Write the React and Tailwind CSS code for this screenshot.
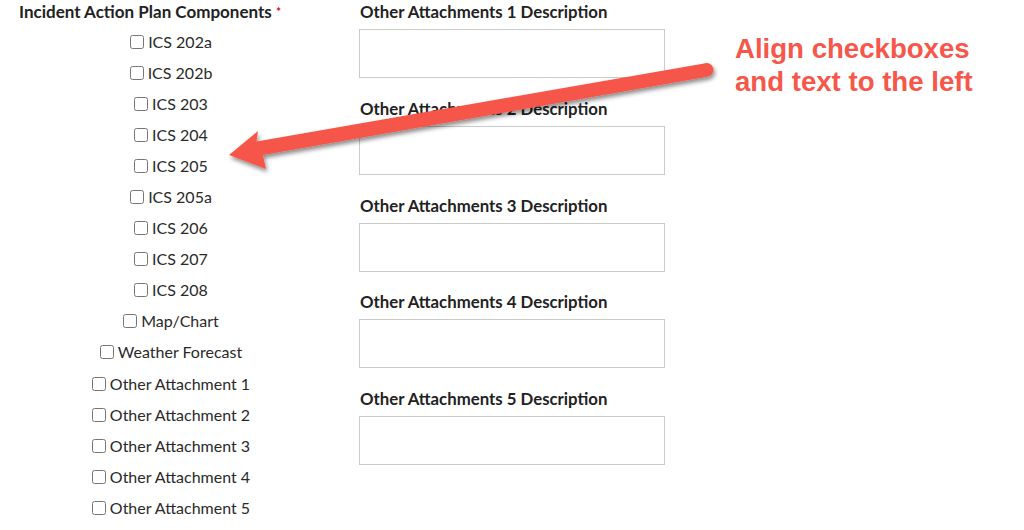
import React from "react";

const components = [
  "ICS 202a",
  "ICS 202b",
  "ICS 203",
  "ICS 204",
  "ICS 205",
  "ICS 205a",
  "ICS 206",
  "ICS 207",
  "ICS 208",
  "Map/Chart",
  "Weather Forecast",
  "Other Attachment 1",
  "Other Attachment 2",
  "Other Attachment 3",
  "Other Attachment 4",
  "Other Attachment 5",
];

const descriptions = [1, 2, 3, 4, 5];

// Red callout arrow pointing back at the checkbox list
const CalloutArrow = () => (
  <svg
    className="absolute inset-0 pointer-events-none"
    width="1024"
    height="530"
    viewBox="0 0 1024 530"
  >
    <defs>
      <filter id="arrowShadow" x="-10%" y="-50%" width="120%" height="200%">
        <feDropShadow dx="1.5" dy="3" stdDeviation="2" floodColor="#000" floodOpacity="0.45" />
      </filter>
    </defs>
    <g filter="url(#arrowShadow)" fill="#f6574a">
      <path d="M707 63 Q713 64 713 70 Q712 75 706 77 L252 157 L248 143 Z" />
      <circle cx="707" cy="70" r="6.5" />
      <path d="M229 155 L258 131 L256 145 L262 151 L266 169 Z" />
    </g>
  </svg>
);

const App = () => {
  return (
    <div className="relative w-[1024px] h-[530px] overflow-hidden bg-white text-[#222] font-['Lato',sans-serif]">
      <div className="flex gap-[17px]">
        {/* Checkbox column */}
        <div className="w-[342px]">
          <div className="pl-[19px] mt-[1px] h-[21px] leading-[21px] text-[17px] font-bold">
            Incident Action Plan Components{" "}
            <span className="text-[#d0021b] text-[12px] align-top">*</span>
          </div>
          <div className="mt-[4px] flex flex-col text-[#2a2a2a]">
            {components.map((name) => (
              <label
                key={name}
                className="h-[31.1px] flex items-center justify-center text-[16px]"
              >
                <input type="checkbox" className="w-[14px] h-[14px] m-0 mr-[4px]" />
                {name}
              </label>
            ))}
          </div>
        </div>

        {/* Description inputs */}
        <div className="w-[306px]">
          {descriptions.map((n) => (
            <div key={n} className="mb-[19.75px] first:mt-[1px]">
              <div className="h-[21px] leading-[21px] text-[16.8px] font-bold pl-[1px]">
                Other Attachments {n} Description
              </div>
              <input
                type="text"
                className="mt-[7px] block w-[306px] h-[49px] border border-[#cacaca] bg-white"
              />
            </div>
          ))}
        </div>
      </div>

      <CalloutArrow />

      <div className="absolute left-[735px] top-[32px] font-['Liberation_Sans',Arial,sans-serif] font-bold text-[27.6px] leading-[33px] text-[#f6574a] [-webkit-text-stroke:6px_white] [paint-order:stroke_fill]">
        Align checkboxes
        <br />
        and text to the left
      </div>
    </div>
  );
};

export default App;
